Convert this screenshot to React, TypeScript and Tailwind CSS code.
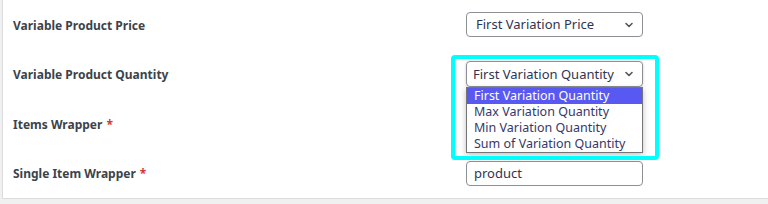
import React from 'react';

const font = { fontFamily: '"Noto Sans", "Open Sans", sans-serif' };

const Chevron = () => (
  <svg className="w-[10px] h-[10px] text-[#50575e]" viewBox="0 0 10 10" fill="none" stroke="currentColor" strokeWidth={1.6} strokeLinecap="round" strokeLinejoin="round">
    <path d="M2 3.5l3 3 3-3" />
  </svg>
);

const options = [
  'First Variation Quantity',
  'Max Variation Quantity',
  'Min Variation Quantity',
  'Sum of Variation Quantity',
];

const Label: React.FC<{ text: string; required?: boolean }> = ({ text, required }) => (
  <div className="w-[463px] pl-[10px] pt-[2px] text-[12px] font-bold text-[#3c434a]">
    {text}
    {required && <span className="ml-1 text-[#d63638]">*</span>}
  </div>
);

export default function App() {
  return (
    <div className="w-[768px] h-[204px] bg-[#f0f0f1] overflow-hidden" style={font}>
      <div className="ml-[2px] h-[199px] bg-white border-l border-b border-[#dcdcde] flex flex-col">
        {/* Variable Product Price */}
        <div className="h-[50px] flex items-center">
          <Label text="Variable Product Price" />
          <div className="w-[177px] h-[25px] border border-[#8c8f94] rounded-[4px] flex items-center justify-between pl-[9px] pr-[8px] text-[13px] text-[#2f3452]">
            <span>First Variation Price</span>
            <Chevron />
          </div>
        </div>

        {/* Variable Product Quantity */}
        <div className="h-[50px] flex items-center">
          <Label text="Variable Product Quantity" />
          <div className="relative">
            <div className="w-[177px] h-[26px] border border-[#8c8f94] rounded-[4px] shadow-[0_0_3px_rgba(0,0,0,0.2)] flex items-center justify-between pl-[6px] pr-[8px] text-[13px] text-[#2f3452]">
              <span>First Variation Quantity</span>
              <Chevron />
            </div>
            {/* open dropdown list */}
            <ul className="absolute left-0 top-[26px] w-[177px] bg-white border border-[#767676] shadow-[0_2px_6px_rgba(0,0,0,0.25)] text-[12.5px] leading-[16px] text-[#35386a] z-10">
              {options.map((o, i) => (
                <li key={o} className={`h-[16px] pl-[7px] ${i === 0 ? 'bg-[#5858f2] text-white' : ''}`}>
                  {o}
                </li>
              ))}
            </ul>
            {/* highlight frame */}
            <div className="absolute -left-[15px] -top-[6px] w-[208px] h-[105px] border-[4px] border-[#00ffff] rounded-[4px] z-20 pointer-events-none" />
          </div>
        </div>

        {/* Items Wrapper */}
        <div className="h-[50px] flex items-center">
          <Label text="Items Wrapper" required />
        </div>

        {/* Single Item Wrapper */}
        <div className="h-[50px] flex items-center">
          <Label text="Single Item Wrapper" required />
          <div className="w-[177px] h-[25px] border border-[#8c8f94] rounded-[4px] flex items-center pl-[7px] text-[13px] text-[#2f3452]">
            product
          </div>
        </div>
      </div>
    </div>
  );
}
